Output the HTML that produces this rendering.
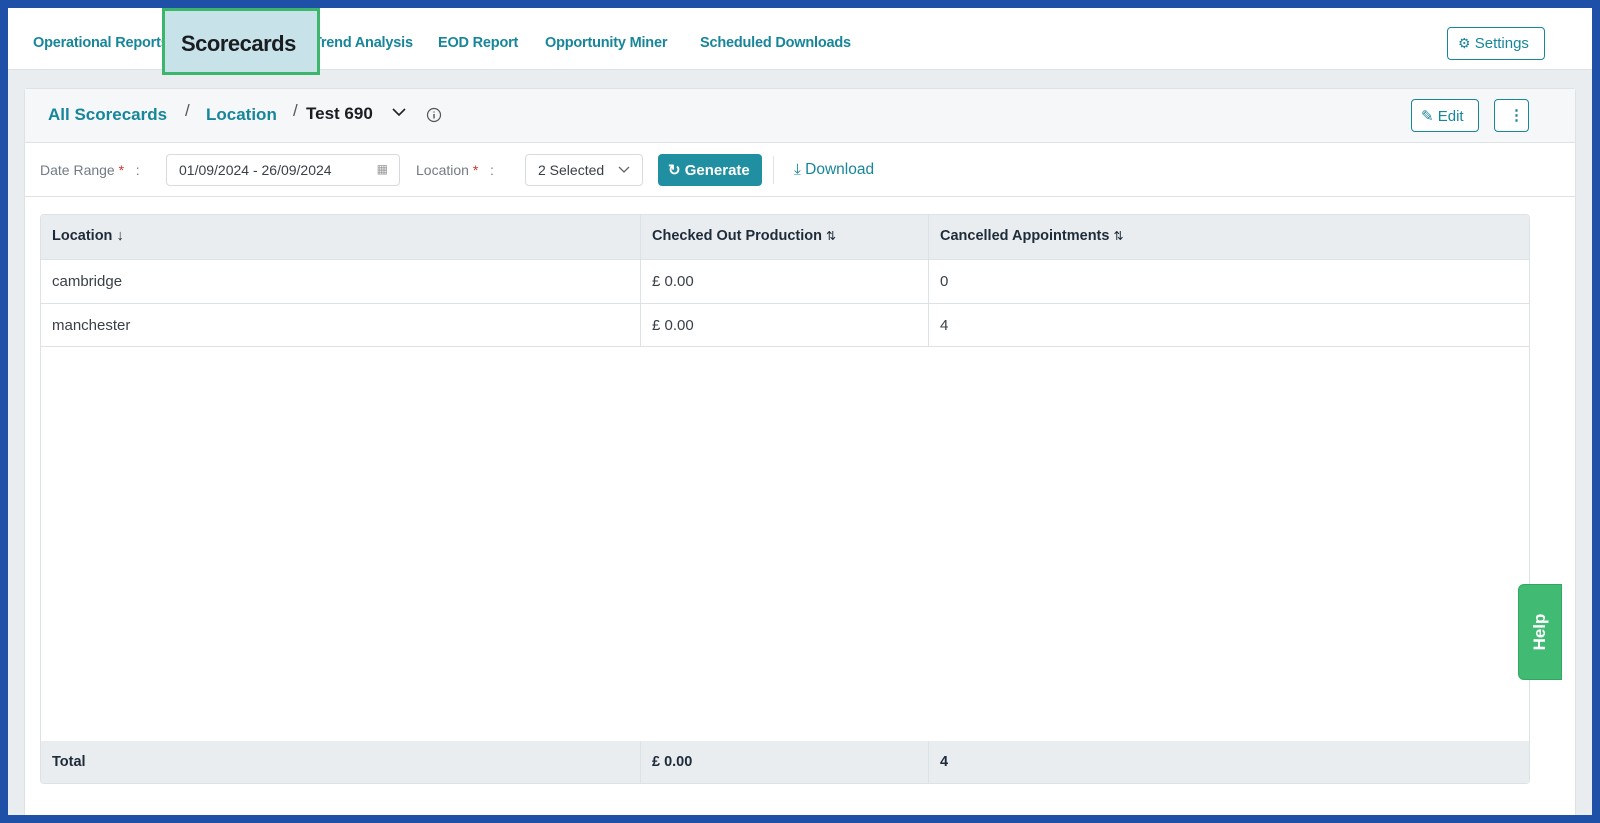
<!DOCTYPE html>
<html><head><meta charset="utf-8"><style>
*{box-sizing:border-box;margin:0;padding:0}
body{width:1600px;height:823px;overflow:hidden;background:#1d50a6;font-family:"Liberation Sans",Arial,sans-serif;position:relative}
.page{position:absolute;left:8px;top:8px;width:1584px;height:807px;background:#eaedf0;overflow:hidden}
.nav{position:absolute;left:0;top:0;width:1584px;height:62px;background:#fff;border-bottom:1px solid #dde2e7}
.nav a{position:absolute;top:27px;font-size:14.5px;font-weight:bold;color:#17869a;white-space:nowrap;letter-spacing:-0.2px}
.sc{position:absolute;left:154px;top:0;width:158px;height:67px;background:#c7e2e9;border:3px solid #3cb56d;font-size:22px;font-weight:bold;color:#1b1e21;padding:20px 0 0 16px;letter-spacing:-0.5px}
.btn{position:absolute;border:1px solid #17869a;border-radius:4px;background:#fff;color:#17869a;font-size:15px}
.card{position:absolute;left:16px;top:80px;width:1552px;height:740px;background:#fff;border:1px solid #dde2e7;border-radius:4px}
.ch{position:absolute;left:0;top:0;width:1550px;height:54px;background:#f5f7f9;border-bottom:1px solid #dde2e7}
.bc{position:absolute;top:16px;font-size:17px;font-weight:bold;color:#17869a}
.lbl{position:absolute;top:73px;font-size:14px;color:#737b84}
.lbl b{color:#d0342c;font-weight:normal}
.inp{position:absolute;top:65px;height:32px;border:1px solid #d6dbe0;border-radius:4px;font-size:14px;color:#3a4047;padding:7px 12px}
.tbl{position:absolute;left:15px;top:125px;width:1490px;height:570px;border:1px solid #dde2e7;border-radius:4px;overflow:hidden}
.row{position:absolute;left:0;width:1488px;border-bottom:1px solid #dde2e7}
.c{position:absolute;top:0;height:100%;padding:13px 11px;font-size:15px;color:#3a4047;border-left:1px solid #dde2e7}
.hd .c,.ft .c{font-weight:bold;color:#1e2b38;font-size:14.5px}
.help{position:absolute;left:1510px;top:576px;width:44px;height:96px;background:#41ba73;border:1px solid #2fa862;border-radius:6px 0 0 6px}
.help span{position:absolute;left:50%;top:50%;transform:translate(-50%,-50%) rotate(-90deg);color:#fff;font-weight:bold;font-size:17px}
</style></head><body>
<div class="page">
<div class="nav">
<a style="left:25px">Operational Reports</a>
<a style="left:305px">Trend Analysis</a>
<a style="left:430px">EOD Report</a>
<a style="left:537px">Opportunity Miner</a>
<a style="left:692px">Scheduled Downloads</a>
<div class="btn" style="left:1439px;top:19px;width:98px;height:33px;padding:7px 0 0 10px;font-size:15px"><span style="font-size:14px">⚙</span> Settings</div>
</div>
<div class="sc">Scorecards</div>
<div class="card">
<div class="ch">
<span class="bc" style="left:23px">All Scorecards</span>
<span style="position:absolute;left:160px;top:12px;color:#555;font-size:17px">/</span>
<span class="bc" style="left:181px">Location</span>
<span style="position:absolute;left:268px;top:12px;color:#555;font-size:17px">/</span>
<span style="position:absolute;left:281px;top:15px;font-size:17px;font-weight:bold;color:#1b1e21">Test 690</span>
<svg style="position:absolute;left:367px;top:18px" width="14" height="10" viewBox="0 0 14 10"><path d="M1 2l6 6 6-6" fill="none" stroke="#222" stroke-width="1.6"/></svg>
<svg style="position:absolute;left:401px;top:18px" width="16" height="16" viewBox="0 0 16 16"><circle cx="8" cy="8" r="6.5" fill="none" stroke="#555" stroke-width="1.2"/><path d="M8 7v4.5M8 4.5v1" stroke="#555" stroke-width="1.4"/></svg>
<div class="btn" style="left:1386px;top:10px;width:68px;height:33px;padding:7px 0 0 9px">✎ Edit</div>
<div class="btn" style="left:1469px;top:10px;width:35px;height:33px;padding:6px 0 0 14px;font-weight:bold">⋮</div>
</div>
<span class="lbl" style="left:15px">Date Range <b>*</b> &nbsp;&nbsp;:</span>
<div class="inp" style="left:141px;width:234px">01/09/2024 - 26/09/2024<span style="position:absolute;right:11px;top:7px;color:#999;font-size:12px">▦</span></div>
<span class="lbl" style="left:391px">Location <b>*</b> &nbsp;&nbsp;:</span>
<div class="inp" style="left:500px;width:118px">2 Selected<svg style="position:absolute;right:12px;top:11px" width="12" height="8"><path d="M1 1l5 5 5-5" fill="none" stroke="#666" stroke-width="1.3"/></svg></div>
<div style="position:absolute;left:633px;top:65px;width:104px;height:32px;background:#1f8fa1;border-radius:4px;color:#fff;font-weight:bold;font-size:15px;padding:7px 0 0 10px">↻ Generate</div>
<div style="position:absolute;left:748px;top:67px;width:1px;height:28px;background:#dde2e7"></div>
<span style="position:absolute;left:769px;top:72px;color:#17869a;font-size:15.5px">⤓ Download</span>
<div style="position:absolute;left:0;top:107px;width:1550px;height:1px;background:#dde2e7"></div>
<div class="tbl">
<div class="row hd" style="top:0;height:45px;background:#eaedf0"><div class="c" style="left:0;border:0">Location <span style="font-weight:normal">↓</span></div><div class="c" style="left:599px">Checked Out Production <span style="font-weight:normal;font-size:12px">⇅</span></div><div class="c" style="left:887px">Cancelled Appointments <span style="font-weight:normal;font-size:12px">⇅</span></div></div>
<div class="row" style="top:45px;height:44px"><div class="c" style="left:0;border:0">cambridge</div><div class="c" style="left:599px">£ 0.00</div><div class="c" style="left:887px">0</div></div>
<div class="row" style="top:89px;height:43px"><div class="c" style="left:0;border:0">manchester</div><div class="c" style="left:599px">£ 0.00</div><div class="c" style="left:887px">4</div></div>
<div class="row ft" style="top:526px;height:44px;background:#eaedf0;border:0"><div class="c" style="left:0;border:0">Total</div><div class="c" style="left:599px">£ 0.00</div><div class="c" style="left:887px">4</div></div>
</div>
</div>
<div class="help"><span>Help</span></div>
</div>
</body></html>
